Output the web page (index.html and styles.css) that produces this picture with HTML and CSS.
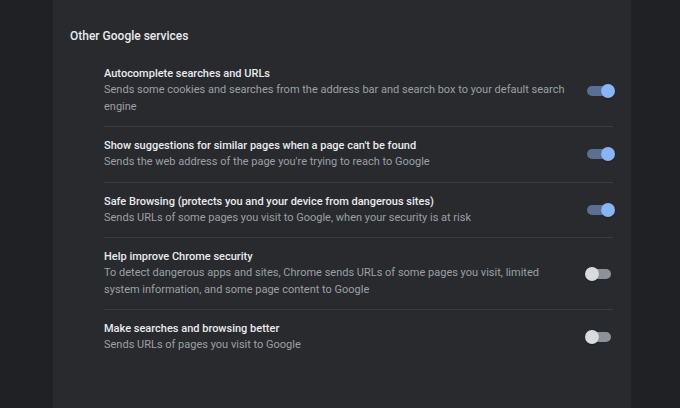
FILE: index.html
```html
<!DOCTYPE html>
<html lang="en">
<head>
    <meta charset="UTF-8">
    <meta name="viewport" content="width=device-width, initial-scale=1.0">
    <title>Other Google services</title>
    <link rel="stylesheet" href="styles.css">
</head>
<body>
    <div class="page">
        <div class="side left"></div>
        <div class="card">
            <h2 class="heading">Other Google services</h2>
            <div class="list">
                <div class="row">
                    <div class="text">
                        <div class="title">Autocomplete searches and URLs</div>
                        <div class="sub">Sends some cookies and searches from the address bar and search box to your default search engine</div>
                    </div>
                    <div class="toggle on"><span class="knob"></span></div>
                </div>
                <div class="row">
                    <div class="text">
                        <div class="title">Show suggestions for similar pages when a page can't be found</div>
                        <div class="sub">Sends the web address of the page you're trying to reach to Google</div>
                    </div>
                    <div class="toggle on"><span class="knob"></span></div>
                </div>
                <div class="row">
                    <div class="text">
                        <div class="title">Safe Browsing (protects you and your device from dangerous sites)</div>
                        <div class="sub">Sends URLs of some pages you visit to Google, when your security is at risk</div>
                    </div>
                    <div class="toggle on"><span class="knob"></span></div>
                </div>
                <div class="row">
                    <div class="text">
                        <div class="title">Help improve Chrome security</div>
                        <div class="sub">To detect dangerous apps and sites, Chrome sends URLs of some pages you visit, limited system information, and some page content to Google</div>
                    </div>
                    <div class="toggle"><span class="knob"></span></div>
                </div>
                <div class="row">
                    <div class="text">
                        <div class="title">Make searches and browsing better</div>
                        <div class="sub">Sends URLs of pages you visit to Google</div>
                    </div>
                    <div class="toggle"><span class="knob"></span></div>
                </div>
            </div>
        </div>
        <div class="side"></div>
    </div>
</body>
</html>
```

FILE: styles.css
```css
body {
    margin: 0;
    background: #202124;
    font-family: Roboto, "Liberation Sans", sans-serif;
    color: #e8eaed;
}
.page {
    display: flex;
    height: 408px;
    overflow: hidden;
}
.side {
    flex: 1;
}
.side.left {
    flex: none;
    width: 53px;
}
.card {
    width: 578px;
    flex: none;
    background: #292a2d;
    padding: 0 18px 0 17px;
    box-sizing: border-box;
}
.heading {
    margin: 28px 0 11px;
    font-size: 12px;
    line-height: 16px;
    font-weight: 500;
    color: #e8eaed;
}
.list {
    margin-left: 34px;
}
.row {
    display: flex;
    align-items: center;
    padding: 11px 0;
    border-bottom: 1px solid #3c3d40;
}
.row:last-child {
    border-bottom: none;
}
.text {
    flex: 1;
    padding-right: 12px;
}
.title {
    font-size: 11px;
    line-height: 16px;
    font-weight: 500;
    color: #e8eaed;
}
.sub {
    font-size: 11px;
    line-height: 16.5px;
    color: #9aa0a6;
}
.toggle {
    position: relative;
    width: 24px;
    height: 10px;
    margin-right: 2px;
    border-radius: 5px;
    background: #8e9298;
    flex: none;
}
.toggle.on {
    background: #5a6f92;
}
.knob {
    position: absolute;
    top: -2px;
    left: -2px;
    width: 14px;
    height: 14px;
    border-radius: 50%;
    background: #d8dcde;
    box-shadow: 0 1px 1px rgba(0, 0, 0, 0.3);
}
.toggle.on .knob {
    left: 14px;
    background: #8ab4f8;
}
```
